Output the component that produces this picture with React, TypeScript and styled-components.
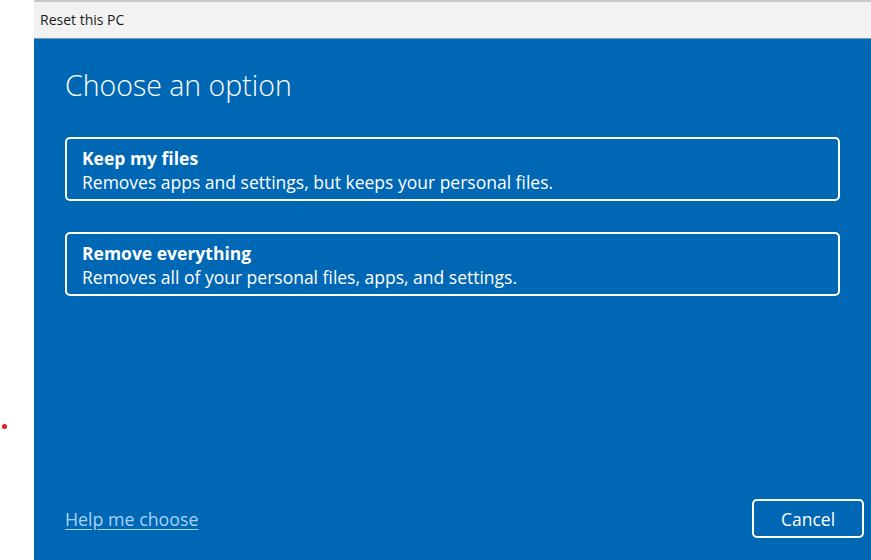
import styled, { createGlobalStyle } from "styled-components";

const GlobalStyle = createGlobalStyle`
  html, body {
    margin: 0;
    padding: 0;
    background: #ffffff;
    font-family: "Open Sans", "Noto Sans", sans-serif;
  }
`;

const options = [
  {
    title: "Keep my files",
    text: "Removes apps and settings, but keeps your personal files.",
  },
  {
    title: "Remove everything",
    text: "Removes all of your personal files, apps, and settings.",
  },
];

const App = () => {
  return (
    <>
      <GlobalStyle />
      <Page>
        <Gutter>
          <Dot />
        </Gutter>
        <Window>
          <BehindStrip />
          <TitleBar>Reset this PC</TitleBar>
          <Body>
            <Heading>Choose an option</Heading>
            <OptionList>
              {options.map((o) => (
                <OptionCard key={o.title}>
                  <OptionTitle>{o.title}</OptionTitle>
                  <OptionText>{o.text}</OptionText>
                </OptionCard>
              ))}
            </OptionList>
            <Footer>
              <HelpLink>Help me choose</HelpLink>
              <CancelButton>Cancel</CancelButton>
            </Footer>
          </Body>
        </Window>
      </Page>
    </>
  );
};

const Page = styled.div`
  display: flex;
  width: 871px;
  height: 560px;
  overflow: hidden;
`;

const Gutter = styled.div`
  width: 34px;
  flex-shrink: 0;
  background: #ffffff;
  padding-top: 424px;
  padding-left: 2px;
  box-sizing: border-box;
`;

const Dot = styled.div`
  width: 5px;
  height: 5px;
  border-radius: 50%;
  background: #e0201c;
`;

const Window = styled.div`
  flex: 1;
  display: flex;
  flex-direction: column;
`;

const BehindStrip = styled.div`
  height: 2px;
  background: #c8c8c8;
`;

const TitleBar = styled.div`
  height: 37px;
  background: #f2f2f2;
  border-bottom: 1px solid #6b9cc4;
  color: #1a1a1a;
  font-size: 14px;
  line-height: 36px;
  padding-left: 6px;
  box-sizing: border-box;
`;

const Body = styled.div`
  flex: 1;
  background: #0067b4;
  display: flex;
  flex-direction: column;
  padding: 27px 7px 22px 31px;
  color: #ffffff;
`;

const Heading = styled.h1`
  margin: 0;
  font-weight: 300;
  font-size: 28.5px;
  line-height: 38px;
`;

const OptionList = styled.div`
  display: flex;
  flex-direction: column;
  gap: 31px;
  margin-top: 33px;
  margin-right: 24px;
`;

const OptionCard = styled.div`
  height: 64px;
  box-sizing: border-box;
  border: 2px solid #ffffff;
  border-radius: 5px;
  padding: 7px 15px;
  display: flex;
  flex-direction: column;
`;

const OptionTitle = styled.div`
  font-weight: 700;
  font-size: 17.5px;
  line-height: 24px;
`;

const OptionText = styled.div`
  font-size: 17.5px;
  line-height: 24px;
`;

const Footer = styled.div`
  margin-top: auto;
  display: flex;
  align-items: center;
  justify-content: space-between;
`;

const HelpLink = styled.a`
  color: #a9d3f5;
  text-decoration: underline;
  text-underline-offset: 3px;
  font-size: 17.8px;
  cursor: pointer;
`;

const CancelButton = styled.button`
  width: 112px;
  height: 39px;
  background: transparent;
  border: 2px solid #ffffff;
  border-radius: 5px;
  color: #ffffff;
  font-family: inherit;
  font-size: 17.5px;
`;

export default App;
